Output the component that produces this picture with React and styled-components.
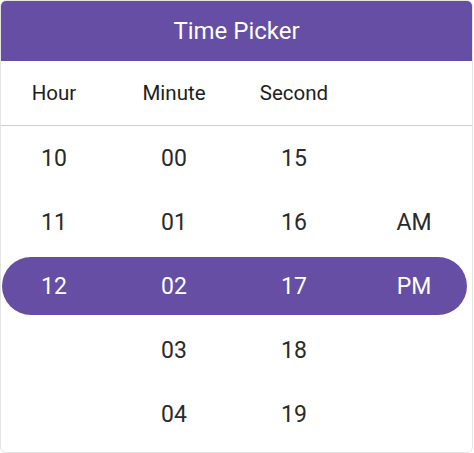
import React from 'react'
import styled, { createGlobalStyle } from 'styled-components'

const Global = createGlobalStyle`
    body {
        margin: 0;
        background: #ffffff;
        font-family: Roboto, "Liberation Sans", sans-serif;
    }
`;

const Card = styled.div`
    width: 473px;
    box-sizing: border-box;
    border: 1px solid #e4e4e4;
    border-radius: 6px;
    overflow: hidden;
    background: #ffffff;
    padding-bottom: 6px;
`;

const Header = styled.div`
    height: 60px;
    background-color: #654ea3;
    color: #ffffff;
    font-size: 24px;
    display: flex;
    align-items: center;
    justify-content: center;
`;

const Row = styled.div`
    display: grid;
    grid-template-columns: repeat(4, 80px);
    column-gap: 40px;
    align-items: center;
    height: 64px;
    padding-left: 13px;
    box-sizing: border-box;
`;

const LabelRow = styled(Row)`
    border-bottom: 1.5px solid #cfcfcf;
    height: 65px;
`;

const Selected = styled(Row)`
    margin: 3px 5px 3px 1px;
    height: 58px;
    padding-left: 12px;
    border-radius: 29px;
    background-color: #654ea3;
`;

const Label = styled.div`
    text-align: center;
    font-size: 20.5px;
    color: #1e1e1e;
`;

const Cell = styled.div`
    text-align: center;
    font-size: 23px;
    color: ${p => (p.$active ? '#ffffff' : '#2a2a2a')};
`;

const labels = ['Hour', 'Minute', 'Second', ''];

const rows = [
    ['10', '00', '15', ''],
    ['11', '01', '16', 'AM'],
    ['12', '02', '17', 'PM'],
    ['', '03', '18', ''],
    ['', '04', '19', ''],
];

export default function App() {
    return (
        <>
            <Global />
            <Card>
                <Header>Time Picker</Header>
                <LabelRow>
                    {labels.map((l, i) => <Label key={i}>{l}</Label>)}
                </LabelRow>
                {rows.map((r, i) => {
                    const Wrap = i === 2 ? Selected : Row;
                    return (
                        <Wrap key={i}>
                            {r.map((v, j) => (
                                <Cell key={j} $active={i === 2}>{v}</Cell>
                            ))}
                        </Wrap>
                    );
                })}
            </Card>
        </>
    );
}
